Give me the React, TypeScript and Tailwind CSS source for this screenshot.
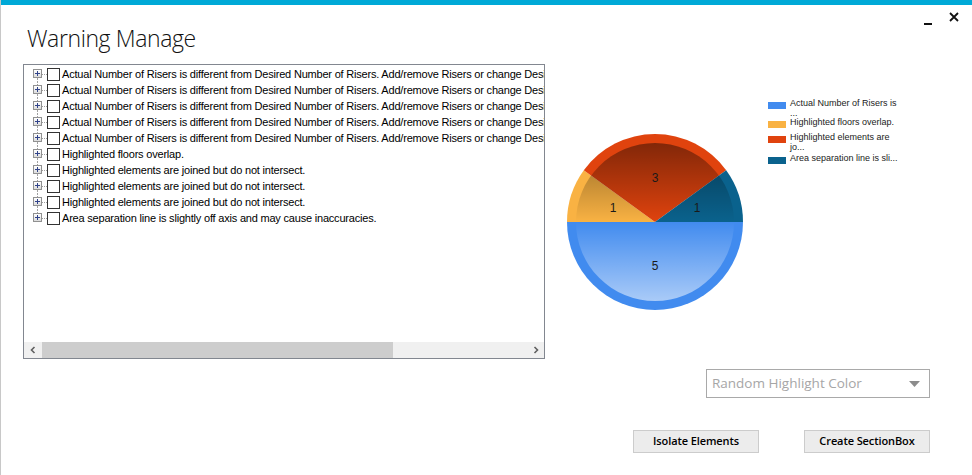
import type { ReactNode } from 'react'

const warnings = [
  'Actual Number of Risers is different from Desired Number of Risers. Add/remove Risers or change Desired Number of Risers.',
  'Actual Number of Risers is different from Desired Number of Risers. Add/remove Risers or change Desired Number of Risers.',
  'Actual Number of Risers is different from Desired Number of Risers. Add/remove Risers or change Desired Number of Risers.',
  'Actual Number of Risers is different from Desired Number of Risers. Add/remove Risers or change Desired Number of Risers.',
  'Actual Number of Risers is different from Desired Number of Risers. Add/remove Risers or change Desired Number of Risers.',
  'Highlighted floors overlap.',
  'Highlighted elements are joined but do not intersect.',
  'Highlighted elements are joined but do not intersect.',
  'Highlighted elements are joined but do not intersect.',
  'Area separation line is slightly off axis and may cause inaccuracies.',
]

const legend = [
  { color: 'bg-[#418bef]', lines: ['Actual Number of Risers is', '...'], mt: 'mt-0' },
  { color: 'bg-[#f9b243]', lines: ['Highlighted floors overlap.'], mt: 'mt-[0px]' },
  { color: 'bg-[#e0430e]', lines: ['Highlighted elements are', 'jo...'], mt: 'mt-[5px]' },
  { color: 'bg-[#0a628d]', lines: ['Area separation line is sli...'], mt: 'mt-[2px]' },
]

function Expander({ first, last }: { first: boolean; last: boolean }) {
  return (
    <div className="flex h-[16px] w-[9px] shrink-0 flex-col items-center">
      <div className={`h-[3px] w-0 ${first ? '' : 'border-l border-dotted border-[#a0a0a0]'}`} />
      <div className="flex h-[9px] w-[9px] items-center justify-center border border-[#919191] bg-gradient-to-b from-white to-[#dcdcdc]">
        <svg width="7" height="7" viewBox="0 0 7 7">
          <path d="M1 3.5h5M3.5 1v5" stroke="#31438a" strokeWidth="1" />
        </svg>
      </div>
      <div className={`h-[4px] w-0 ${last ? '' : 'border-l border-dotted border-[#a0a0a0]'}`} />
    </div>
  )
}

function TreeRow({ text, first, last }: { text: string; first: boolean; last: boolean }) {
  return (
    <div className="flex h-[16px] items-center">
      <Expander first={first} last={last} />
      <div className="h-0 w-[5px] shrink-0 border-t border-dotted border-[#a0a0a0]" />
      <div className="h-[13px] w-[13px] shrink-0 border border-[#333] bg-white" />
      <span className="ml-[2px] shrink-0 whitespace-nowrap text-[11px] leading-[16px] tracking-[-0.2px] text-black">
        {text}
      </span>
    </div>
  )
}

function ScrollArrow({ dir }: { dir: 'left' | 'right' }) {
  return (
    <div className="flex h-full w-[17px] items-center justify-center">
      <svg width="6" height="8" viewBox="0 0 6 8">
        <path
          d={dir === 'left' ? 'M4.5 1L1.5 4l3 3' : 'M1.5 1l3 3-3 3'}
          fill="none"
          stroke="#606060"
          strokeWidth="1.6"
        />
      </svg>
    </div>
  )
}

function PieChart() {
  return (
    <svg width="180" height="180" viewBox="0 0 180 180">
      <defs>
        <linearGradient id="shade" x1="0" y1="0" x2="0" y2="1">
          <stop offset="0" stopColor="#000" stopOpacity="0.42" />
          <stop offset="0.5" stopColor="#000" stopOpacity="0" />
          <stop offset="0.5" stopColor="#fff" stopOpacity="0" />
          <stop offset="1" stopColor="#fff" stopOpacity="0.55" />
        </linearGradient>
      </defs>
      <path d="M90 90L2 90A88 88 0 0 0 178 90Z" fill="#418bef" />
      <path d="M90 90L2 90A88 88 0 0 1 18.81 38.28Z" fill="#f9b243" />
      <path d="M90 90L18.81 38.28A88 88 0 0 1 161.19 38.28Z" fill="#e0430e" />
      <path d="M90 90L161.19 38.28A88 88 0 0 1 178 90Z" fill="#0a628d" />
      <circle cx="90" cy="90" r="79" fill="url(#shade)" />
      <g fontFamily="'Liberation Sans', Arial, sans-serif" fontSize="12" fill="#1a1a1a" textAnchor="middle" dominantBaseline="central">
        <text x="90" y="46">3</text>
        <text x="48" y="76">1</text>
        <text x="132" y="76">1</text>
        <text x="90" y="134">5</text>
      </g>
    </svg>
  )
}

function Btn({ children }: { children: ReactNode }) {
  return (
    <button
      type="button"
      className="h-[23px] w-[126px] border border-[#cccccc] bg-[#ececec] text-[11px] font-semibold tracking-[-0.1px] text-black"
    >
      {children}
    </button>
  )
}

export default function App() {
  return (
    <div className="h-[475px] w-[972px] overflow-hidden border-l border-[#c8c8c8] bg-white font-['Open_Sans',sans-serif]">
      <div className="h-[5px] bg-[#00a9d7]" />

      <div className="flex h-[59px]">
        <h1 className="ml-[26px] mt-[16px] text-[23px] font-light leading-[34px] tracking-[-0.4px] text-[#111]">
          Warning Manage
        </h1>
        <div className="ml-auto mr-[13px] mt-[6px] flex items-start gap-[17px]">
          <svg width="8" height="14" viewBox="0 0 8 14">
            <rect x="0" y="12" width="8" height="2" fill="#111" />
          </svg>
          <svg width="10" height="10" viewBox="0 0 10 10" className="mt-[1px]">
            <path d="M1 1l8 8M9 1L1 9" stroke="#111" strokeWidth="1.8" />
          </svg>
        </div>
      </div>

      <div className="flex">
        <div className="ml-[22px] flex h-[295px] w-[522px] flex-col border border-[#828790] font-['Liberation_Sans',Arial,sans-serif]">
          <div className="flex-1 overflow-hidden pl-[9px] pt-[1px]">
            {warnings.map((w, i) => (
              <TreeRow key={i} text={w} first={i === 0} last={i === warnings.length - 1} />
            ))}
          </div>
          <div className="flex h-[16px] bg-[#f0f0f0]">
            <ScrollArrow dir="left" />
            <div className="flex flex-1 items-stretch">
              <div className="ml-[1px] w-[351px] bg-[#cdcdcd]" />
            </div>
            <ScrollArrow dir="right" />
          </div>
        </div>

        <div className="flex flex-1 flex-col">
          <div className="flex h-[305px] items-start">
            <div className="ml-[20px] mt-[68px]">
              <PieChart />
            </div>
            <div className="ml-[23px] mt-[35px] flex flex-col font-['Liberation_Sans',Arial,sans-serif] text-[9px] leading-[9.5px] text-[#222]">
              {legend.map((l, i) => (
                <div key={i} className={`flex items-start ${l.mt}`}>
                  <div className={`mt-[3px] h-[7px] w-[18px] shrink-0 ${l.color}`} />
                  <div className="ml-[4px] w-[120px]">
                    {l.lines.map((t, j) => (
                      <div key={j}>{t}</div>
                    ))}
                  </div>
                </div>
              ))}
            </div>
          </div>

          <div className="ml-[161px] flex h-[29px] w-[224px] items-center border border-[#a9a9a9] bg-white pl-[5px] pr-[9px]">
            <span className="text-[13.5px] text-[#a6a6a6]">Random Highlight Color</span>
            <svg width="11" height="6" viewBox="0 0 11 6" className="ml-auto">
              <path d="M0 0h11L5.5 6Z" fill="#8c8c8c" />
            </svg>
          </div>

          <div className="ml-[88px] mt-[32px] flex gap-[45px]">
            <Btn>Isolate Elements</Btn>
            <Btn>Create SectionBox</Btn>
          </div>
        </div>
      </div>
    </div>
  )
}
